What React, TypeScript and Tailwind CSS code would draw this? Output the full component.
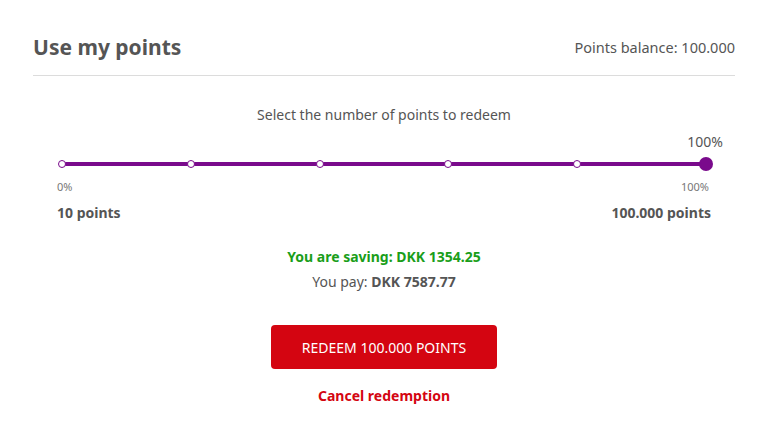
const ticks = [0, 20, 40, 60, 80];

export default function App() {
  return (
    <div
      className="w-[768px] h-[428px] bg-white text-[#555] px-[33px] pt-[33px]"
      style={{ fontFamily: '"Noto Sans", "Open Sans", sans-serif' }}
    >
      <div className="flex items-center justify-between h-[29px]">
        <h1 className="text-[21px] font-bold text-[#555]">Use my points</h1>
        <span className="text-[14.5px] text-[#555]">Points balance: 100.000</span>
      </div>
      <div className="mt-[13px] h-px bg-[#dcdcdc]" />

      <div className="px-[24px]">
        <p className="mt-[30px] text-center text-[14px] leading-[18px]">
          Select the number of points to redeem
        </p>
        <div className="mt-[9px] flex justify-end -mr-[12px] text-[14px] leading-[18px]">100%</div>

        <div className="relative mt-[6px] h-[14px] mx-[5px]">
          <div className="absolute left-0 right-0 top-[5px] h-[4px] rounded-full bg-[#7a0a8c]" />
          {ticks.map((t) => (
            <div
              key={t}
              className="absolute top-[3px] w-[8px] h-[8px] -ml-[4px] rounded-full bg-white border-[1.5px] border-[#7a0a8c]"
              style={{ left: `${t}%` }}
            />
          ))}
          <div className="absolute top-0 right-0 w-[14px] h-[14px] -mr-[7px] rounded-full bg-[#7a0a8c]" />
        </div>

        <div className="mt-[9px] flex justify-between text-[11px] text-[#777] leading-[14px]">
          <span>0%</span>
          <span className="mr-[2px]">100%</span>
        </div>
        <div className="mt-[10px] flex justify-between text-[14px] font-bold leading-[18px]">
          <span>10 points</span>
          <span>100.000 points</span>
        </div>
      </div>

      <div className="mt-[26px] text-center text-[14px] leading-[18px]">
        <p className="font-bold text-[#1a9e1a]">You are saving: DKK 1354.25</p>
        <p className="mt-[7px]">
          You pay: <span className="font-bold">DKK 7587.77</span>
        </p>
      </div>

      <div className="mt-[34px] flex flex-col items-center">
        <button className="w-[226px] h-[44px] rounded-[4px] bg-[#d40511] text-white text-[14px]">
          REDEEM 100.000 POINTS
        </button>
        <button className="mt-[18px] text-[14px] font-bold leading-[18px] text-[#d40511]">Cancel redemption</button>
      </div>
    </div>
  );
}
